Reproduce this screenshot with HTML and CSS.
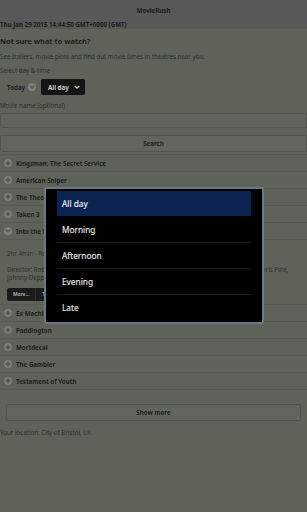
FILE: index.html
```html
<!DOCTYPE html>
<html>
<head>
  <meta charset="UTF-8">
  <title>MovieRush</title>
  <link rel="stylesheet" href="styles.css">
</head>
<body>
  <div class="header">
    <div class="title">MovieRush</div>
    <div class="date">Thu Jan 29 2015 14:44:50 GMT+0000 (GMT)</div>
  </div>

  <div class="content">
    <h2>Not sure what to watch?</h2>
    <p class="intro">See trailers, movie plots and find out movie times in theatres near you.</p>

    <div class="label">Select day &amp; time</div>
    <div class="picker">
      <div class="today">Today
        <svg class="disc" viewBox="0 0 8 8"><circle cx="4" cy="4" r="4"/><path d="M2.3 3.2L4 4.9 5.7 3.2"/></svg>
      </div>
      <div class="allday">All day
        <svg class="chev" viewBox="0 0 8 8"><path d="M1.8 3L4 5.2 6.2 3"/></svg>
      </div>
    </div>

    <div class="label name-label">Movie name (optional)</div>
    <div class="input"></div>
    <div class="btn search">Search</div>

    <ul class="movies">
      <li class="movie"><svg class="ico" viewBox="0 0 8 8"><circle cx="4" cy="4" r="4"/><path d="M4 1.8v4.4M1.8 4h4.4"/></svg>Kingsman: The Secret Service</li>
      <li class="movie"><svg class="ico" viewBox="0 0 8 8"><circle cx="4" cy="4" r="4"/><path d="M4 1.8v4.4M1.8 4h4.4"/></svg>American Sniper</li>
      <li class="movie"><svg class="ico" viewBox="0 0 8 8"><circle cx="4" cy="4" r="4"/><path d="M4 1.8v4.4M1.8 4h4.4"/></svg>The Theory of Everything</li>
      <li class="movie"><svg class="ico" viewBox="0 0 8 8"><circle cx="4" cy="4" r="4"/><path d="M4 1.8v4.4M1.8 4h4.4"/></svg>Taken 3</li>
      <li class="movie open">
        <div class="row"><svg class="ico" viewBox="0 0 8 8"><circle cx="4" cy="4" r="4"/><path d="M1.8 4h4.4"/></svg>Into the Woods</div>
        <div class="details">
          <div class="runtime">2hr 4min - Rated PG</div>
          <div class="cast">Director: Rob Marshall - Cast: Meryl Streep, Emily Blunt, James Corden, Anna Kendrick, Chris Pine, Johnny Depp</div>
          <div class="actions"><span class="mini">More...</span><span class="mini">Trailer</span></div>
        </div>
      </li>
      <li class="movie"><svg class="ico" viewBox="0 0 8 8"><circle cx="4" cy="4" r="4"/><path d="M4 1.8v4.4M1.8 4h4.4"/></svg>Ex Machina</li>
      <li class="movie"><svg class="ico" viewBox="0 0 8 8"><circle cx="4" cy="4" r="4"/><path d="M4 1.8v4.4M1.8 4h4.4"/></svg>Paddington</li>
      <li class="movie"><svg class="ico" viewBox="0 0 8 8"><circle cx="4" cy="4" r="4"/><path d="M4 1.8v4.4M1.8 4h4.4"/></svg>Mortdecai</li>
      <li class="movie"><svg class="ico" viewBox="0 0 8 8"><circle cx="4" cy="4" r="4"/><path d="M4 1.8v4.4M1.8 4h4.4"/></svg>The Gambler</li>
      <li class="movie"><svg class="ico" viewBox="0 0 8 8"><circle cx="4" cy="4" r="4"/><path d="M4 1.8v4.4M1.8 4h4.4"/></svg>Testament of Youth</li>
    </ul>

    <div class="btn more">Show more</div>
    <div class="location">Your location: City of Bristol, UK</div>
  </div>

  <!-- day & time picker, open over the page -->
  <div class="dialog">
    <ul>
      <li class="selected">All day</li>
      <li>Morning</li>
      <li>Afternoon</li>
      <li>Evening</li>
      <li>Late</li>
    </ul>
  </div>
</body>
</html>
```

FILE: styles.css
```css
body { margin: 0; background: #5d6359; font-family: "Noto Sans", "Open Sans", sans-serif; font-size: 6.2px; color: #2c2f2b; }

.header { background: #585858; color: #1c1c1c; font-weight: bold; }
.title { height: 20px; line-height: 21px; text-align: center; }
.date { height: 9px; line-height: 9px; }

h2 { margin: 7px 0 0; font-size: 7.4px; line-height: 10px; color: #1d1f1c; }
.intro { margin: 7px 0 0; line-height: 8px; }
.label { margin-top: 6px; line-height: 8px; }
.name-label { margin-top: 7px; }

.picker { display: flex; height: 16px; margin-top: 4px; font-weight: bold; }
.today { width: 40px; display: flex; align-items: center; gap: 3px; padding-left: 7px; box-sizing: border-box; color: #222; }
.disc { width: 8px; height: 8px; }
.disc circle { fill: #7f807e; }
.disc path { fill: none; stroke: #4e4f4d; stroke-width: 1.3; }
.allday { width: 44px; margin-left: 1px; display: flex; align-items: center; gap: 4px; padding-left: 7px; box-sizing: border-box; background: #141414; color: #cfcfcf; border-radius: 2px; }
.chev { width: 8px; height: 8px; }
.chev path { fill: none; stroke: #d0d0d0; stroke-width: 1.3; }

.input { height: 15px; margin-top: 3px; box-sizing: border-box; border: 1px solid #50554e; background: #5f645d; border-radius: 2px; }

.btn { height: 17px; line-height: 15px; box-sizing: border-box; border: 1px solid #50554e; background: #60655e; text-align: center; font-weight: bold; color: #202220; border-radius: 2px; }
.search { margin-top: 7px; }

.movies { list-style: none; margin: 2px 0 0; padding: 0; border-top: 1px solid #545a51; font-weight: bold; color: #1f211e; }
.movie { height: 16px; display: flex; align-items: center; gap: 4px; padding-left: 4px; border-bottom: 1px solid #545a51; }
.movie.open { height: auto; display: block; padding-left: 0; }
.row { height: 16px; display: flex; align-items: center; gap: 4px; padding-left: 4px; border-bottom: 1px solid #545a51; }
.ico { width: 8px; height: 8px; flex: none; }
.ico circle { fill: #7c7f7a; }
.ico path { stroke: #4c4f4a; stroke-width: 1.4; }

.details { padding: 10px 7px 3px; font-weight: normal; color: #2c2f2b; }
.runtime { line-height: 8px; }
.cast { margin-top: 8px; line-height: 8px; padding-right: 10px; }
.actions { display: flex; margin-top: 6px; }
.mini { height: 13px; line-height: 13px; padding: 0 6px; background: #1c1c1c; color: #a9a9a9; font-size: 4.8px; font-weight: bold; border-right: 1px solid #2c2c2c; }
.mini:first-child { border-radius: 2px 0 0 2px; }

.more { margin: 14px 6px 0; }
.location { margin-top: 8px; line-height: 8px; }

.dialog { position: fixed; left: 44px; top: 187px; width: 220px; height: 137px; box-sizing: border-box; border: 2px solid #6a7888; border-radius: 2px; background: #000; padding: 2px 11px; }
.dialog ul { list-style: none; margin: 0; padding: 0; }
.dialog li { height: 25px; line-height: 25px; padding-left: 5px; font-size: 8.3px; color: #e6e6e6; border-bottom: 1px solid #1c1c1c; -webkit-text-stroke: 0.15px #e6e6e6; }
.dialog li:last-child { border-bottom: none; }
.dialog li.selected { background: #0b2350; color: #f0f0f0; border-bottom-color: #000; }
```
